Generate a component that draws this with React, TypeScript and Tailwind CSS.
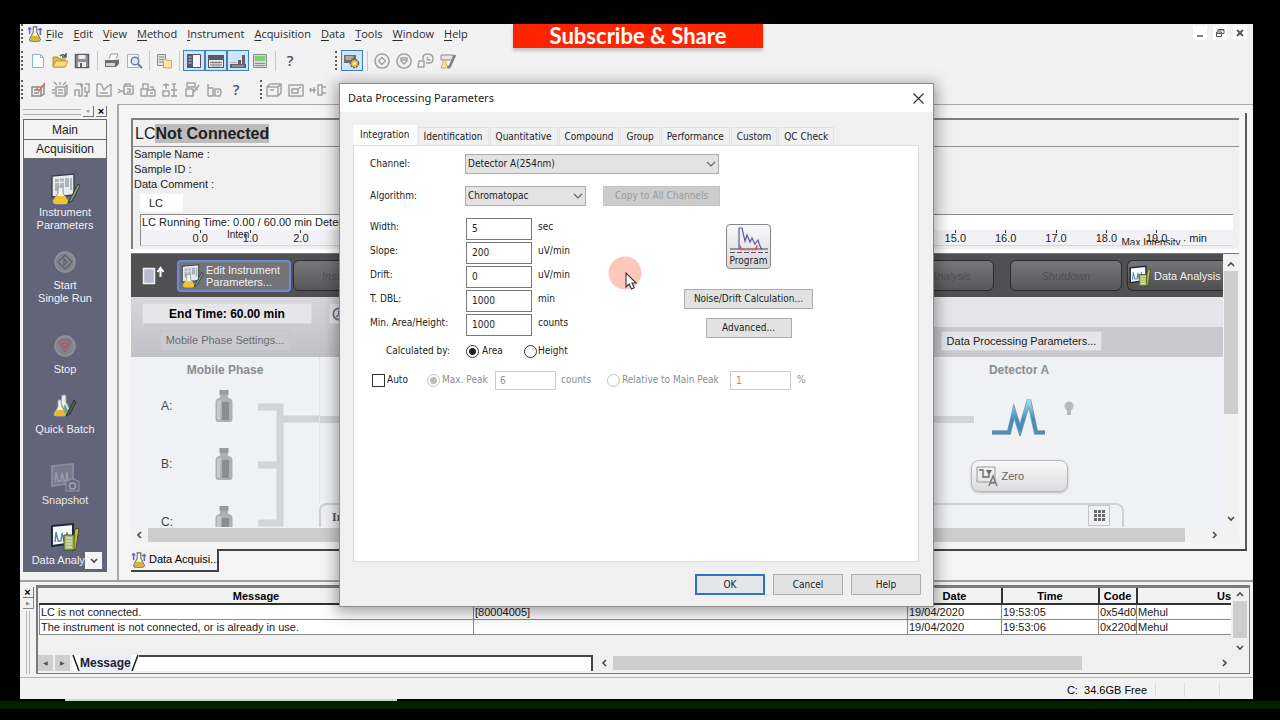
import type { ReactNode } from "react";

const arial = "font-['Liberation_Sans',sans-serif]";
const ui = "font-['DejaVu_Sans_Condensed','Noto_Sans',sans-serif]";

/* ---------- icons ---------- */

function Ico({ children, size = "h-[18px] w-[18px]" }: { children: ReactNode; size?: string }) {
  return (
    <svg viewBox="0 0 18 18" className={`${size} shrink-0`} fill="none" aria-hidden="true">
      {children}
    </svg>
  );
}

const FlaskLogo = () => (
  <Ico size="h-4 w-4">
    <path d="M3 1v8M1 3h4M15 2v8M12 4h5" stroke="#6a6ab8" strokeWidth="1.8" />
    <path d="M7 1h4v6l4 8q0 2-2 2H5q-2 0-2-2l4-8z" fill="#f7f7e8" stroke="#666" strokeWidth="1.2" />
    <path d="M5.5 11h7l2 4q0 1.5-1.5 1.5H5q-1.5 0-1.5-1.5z" fill="#d8b52a" />
  </Ico>
);

const InstrumentIcon = ({ size = "h-8 w-8" }: { size?: string }) => (
  <svg viewBox="0 0 32 32" className={`${size} shrink-0`} fill="none" aria-hidden="true">
    <path d="M3 3l22-2v21L3 24z" fill="#e6ebee" stroke="#39424c" strokeWidth="1.4" />
    <path d="M6 6h4v3H6zM11 5.500h4v3h-4zM16 5h4v9h-4zM6 10h4v8H6zM11 10h4v4h-4zM21 5h2v12h-2z" fill="#a9b4bd" />
    <path d="M9 14h5v6l5 8q0 3-3 3H7q-3 0-3-3l5-8z" fill="#f3f6ee" stroke="#8a9098" />
    <path d="M7 23h9l3 5q0 3-3 3H7q-3 0-3-3z" fill="#eec52c" />
    <path d="M29 11l-8 15-2 4 4-2 8-15z" fill="#8a9a78" stroke="#2c3638" />
  </svg>
);

const AnalysisIcon = ({ dim = false, size = "h-8 w-8" }: { dim?: boolean; size?: string }) => (
  <svg viewBox="0 0 32 32" className={`${size} shrink-0`} fill="none" opacity={dim ? 0.55 : 1} aria-hidden="true">
    <path d="M3 5l21-2v19L3 25z" fill={dim ? "#8b8e9c" : "#f5fafc"} stroke={dim ? "#a9abb5" : "#1f2b38"} strokeWidth="2" />
    <path d="M6 21l1-10 2 9 3 0 1-8 2 8 2-1 1-8 1 8" stroke={dim ? "#c6c8d0" : "#5f7fa8"} strokeWidth="1.400" />
    {dim ? (
      <>
        <path d="M17 20h3l1-2h5l1 2h3v10H17z" fill="#6c6f7e" stroke="#c6c8d0" />
        <circle cx="23.500" cy="25" r="3" stroke="#d6d8de" strokeWidth="1.500" />
      </>
    ) : (
      <>
        <path d="M26 8l4-1-3 21-4 2z" fill="#c2b54a" stroke="#4c4a22" />
        <path d="M15 14h10v15H15z" fill="#a9bb6c" stroke="#445028" />
        <path d="M17 17h6M17 20h6M17 23h6M17 26h6" stroke="#eef3cf" />
      </>
    )}
  </svg>
);

const RoundIcon = ({ red = false }: { red?: boolean }) => (
  <svg viewBox="0 0 32 32" className="h-8 w-8" fill="none" aria-hidden="true">
    <circle cx="16" cy="16" r="10" fill="#83848d" stroke="#92939c" strokeWidth="1.500" />
    {red ? (
      <path d="M10 12l3-2h6l3 2-6 10zM13 13h6l-3 5z" stroke="#a0606a" strokeWidth="1.400" />
    ) : (
      <path d="M16 9l7 7-7 7-7-7zM15 13v6l3-3z" stroke="#60636e" strokeWidth="1.400" />
    )}
  </svg>
);

const BatchIcon = () => (
  <svg viewBox="0 0 32 32" className="h-8 w-8" fill="none" aria-hidden="true">
    <path d="M9 10h4v7l4 7q0 2-2 2H7q-2 0-2-2l4-7z" fill="#f4f4ea" stroke="#9aa" />
    <path d="M8 20h6l3 4q0 2-2 2H7q-2 0-2-2z" fill="#ecb62f" />
    <path d="M13 5h4v7l4 8h-6l-3-7z" fill="#e9efe9" stroke="#8b9a98" />
    <path d="M16 14l5 10h-5l-2-5z" fill="#7da78d" />
    <path d="M25 10l-6 12-2 4 4-2 6-12z" fill="#566052" stroke="#2c342c" />
  </svg>
);

const G = ({ d }: { d: string }) => (
  <Ico>
    <path d={d} stroke="#a2a2a2" strokeWidth="1.500" strokeLinejoin="round" />
  </Ico>
);

const TestIcon = () => (
  <Ico>
    <path d="M3 6h9v9H3zM12 6l3-2v9l-3 2M5 9h4M5 12h5" stroke="#8c8c8c" strokeWidth="1.500" />
    <path d="M7 6l3 4 6-8" stroke="#e06a6a" strokeWidth="1.500" />
  </Ico>
);

const HelpIcon = () => <span className="font-['Noto_Sans',sans-serif] text-[15px] leading-none font-medium text-[#484858]">?</span>;

const NewIcon = () => (
  <Ico>
    <path d="M3.500 2.500h8l3 3v10h-11z" fill="#fbfdff" stroke="#8fb0dc" />
    <path d="M11.500 2.500v3h3" stroke="#8fb0dc" />
  </Ico>
);
const OpenIcon = () => (
  <Ico>
    <path d="M2 5h5l1 2h6v8H2z" fill="#e7b84a" stroke="#b08a3a" />
    <path d="M5 9h12l-3 6H2z" fill="#fbdc85" stroke="#c79c40" />
    <path d="M9 4q3-3 6 1M15 1v4h-4" stroke="#555" strokeWidth="1.500" />
  </Ico>
);
const SaveIcon = () => (
  <Ico>
    <path d="M2.500 2.500h13v13h-13z" fill="#8e9296" stroke="#5c6066" strokeWidth="1.500" />
    <path d="M5.500 3h7v4h-7zM5 10h8v5H5z" fill="#eceef0" />
    <path d="M7 11h2v4H7z" fill="#5c6066" />
  </Ico>
);
const PrintIcon = () => (
  <Ico>
    <path d="M6 7l2-5h7l-2 5" fill="#fff" stroke="#9a9a9a" />
    <path d="M2 8h12l2-1v5l-3 3H2z" fill="#6e6e6e" />
    <path d="M3 11h9v3H3z" fill="#d4d4d4" />
  </Ico>
);
const PreviewIcon = () => (
  <Ico>
    <path d="M2.500 2.500h11v13h-11z" fill="#f6f8fc" stroke="#a9afc4" />
    <circle cx="10" cy="9" r="3.800" fill="#dfe7f5" stroke="#6f7aa6" strokeWidth="1.400" />
    <path d="M13 12l4 4" stroke="#6f7aa6" strokeWidth="2" />
  </Ico>
);
const ReportIcon = () => (
  <Ico>
    <path d="M2.500 2.500h8v11h-8zM4 5h5M4 7.500h5M4 10h5" fill="#e2e2e2" stroke="#8a8a8a" />
    <path d="M8.500 7h3l1 1.500h4V16h-8z" fill="#fbe3a0" stroke="#c9a962" />
  </Ico>
);
const PaneLeft = () => (
  <Ico>
    <path d="M2.500 2.500h13v13h-13z" fill="#f4f6fa" stroke="#555" />
    <path d="M2 2h6v14H2z" fill="#50586a" />
    <path d="M3.500 5h3M3.500 8h3M3.500 11h3" stroke="#cdd3e0" />
  </Ico>
);
const PaneGrid = () => (
  <Ico>
    <path d="M1.500 3.500h15v12h-15z" fill="#e4e4e4" stroke="#555" />
    <path d="M1 3h16v5H1z" fill="#555b66" />
    <path d="M3 10.500h12M3 13h12M6 9v6M9 9v6M12 9v6" stroke="#8a8a8a" />
  </Ico>
);
const PaneBars = () => (
  <Ico>
    <path d="M1 12h16v4H1zM9 8h3v6H9zM13 3h3v11h-3z" fill="#5f6368" />
    <path d="M1 10.500h7M3 14h12" stroke="#b8b8b8" />
  </Ico>
);
const MonitorIcon = () => (
  <Ico>
    <path d="M2.500 2.500h13v13h-13z" fill="#d8d8d8" stroke="#8a8a8a" />
    <path d="M4 4h10v5H4z" fill="#7ed07e" />
    <path d="M4 11.500h10M4 13.500h10" stroke="#8e8e8e" />
  </Ico>
);
const GearIcon = () => (
  <Ico>
    <path d="M1 3h12v8H1z" fill="#6e6e6e" />
    <path d="M2.500 5h8M2.500 7h6" stroke="#e8e8e8" />
    <circle cx="11.500" cy="11.500" r="4" fill="#e9bf55" stroke="#7a6226" strokeWidth="1.500" strokeDasharray="2 .8" />
    <circle cx="11.500" cy="11.500" r="1.300" fill="#fff" />
  </Ico>
);
const PenFlask = () => (
  <Ico>
    <path d="M2 3h12v5H2z" fill="#e6e6e6" stroke="#8c8c8c" />
    <path d="M4 8h3v3l2 5H2l2-5z" fill="#f3e3a8" stroke="#c9ae60" />
    <path d="M16 3l-5 11-2 2" stroke="#808080" strokeWidth="2.500" />
  </Ico>
);

function Chevron({ dir, className = "" }: { dir: "up" | "down" | "left" | "right"; className?: string }) {
  const d = { up: "M1 6l3-3 3 3", down: "M1 2l3 3 3-3", left: "M5 1L2 4l3 3", right: "M3 1l3 3-3 3" }[dir];
  return (
    <svg viewBox="0 0 8 8" className={`h-2 w-2 shrink-0 ${className}`} fill="none" aria-hidden="true">
      <path d={d} stroke="#4a4a4a" strokeWidth="1.600" />
    </svg>
  );
}

/* ---------- menu and tool bars ---------- */

const Grip = () => <span className="h-[19px] w-[3px] shrink-0 border-l-2 border-dotted border-[#5a5a5a]" />;
const Sep = () => (
  <span className="flex w-2 shrink-0 justify-center">
    <span className="h-5 w-px bg-[#c8c8c8]" />
  </span>
);

function Tool({ label, active = false, children }: { label: string; active?: boolean; children: ReactNode }) {
  return (
    <button
      type="button"
      aria-label={label}
      className={`flex h-[21px] w-[22px] shrink-0 items-center justify-center ${active ? "border border-[#3f7fc0] bg-[#cfe4f7]" : ""}`}
    >
      {children}
    </button>
  );
}

const menus = ["File", "Edit", "View", "Method", "Instrument", "Acquisition", "Data", "Tools", "Window", "Help"];

const grayTools: [string, string][] = [
  ["Batch table", "M5 6h9v9H5zM14 6l2-2v8l-2 3M6 4L3 1M9 4V1M12 4l3-3M1 9h3M1 12h3M7 9h5M7 12h5"],
  ["Sequence", "M2 15V9h4v6h3V3H3M12 3h4v8h-4V6M7 3l2 3M11 15h4M14 11v4"],
  ["Plot", "M2 3v12h14V3M2 3h4l3 6 3-3 4-3M5 12h8"],
  ["Pump", "M7 5h9v8H7zM1 8l3 2-3 2M4 10h3M8 5V3h6M10 8h3v3h-3"],
  ["Oven", "M4 3h5v5H4zM2 8h6v7H2zM9 9h7v6H9M11 12h3M11 6h3v3"],
  ["Valve", "M2 4h6M5 2v6M2 10h6v5H2zM11 3h4M13 3v12M10 9h6M10 15h6"],
  ["Autosampler", "M4 2h8v4H4zM3 8h7v7H3zM10 12l6-8M12 7l3 2"],
  ["Detector", "M3 3v12M3 15h5V7H3M10 8h5q2 3 0 7h-5zM12 11h2"],
];
const boxTools: [string, string][] = [
  ["Module", "M2 6h11v9H2zM2 6l3-3h11l-3 3M16 3v9l-3 3M5 9h4"],
  ["Controller", "M2 4h14v11H2zM5 8h6v4H5zM11 8l3-2"],
  ["Flow", "M1 9h6M5 6v6M9 4h4v10H9zM13 6h4M13 12h4M2 7l-1 2 1 2"],
];

function MenuBar() {
  return (
    <div className="flex h-[22px] items-start pb-[3px] pl-px">
      <nav className="flex flex-1 items-center font-['Open_Sans','Noto_Sans',sans-serif] text-[11px] leading-4 font-medium text-[#2c2c2c]" aria-label="Main menu">
        <Grip />
        <span className="mr-[3px] ml-[3px]">
          <FlaskLogo />
        </span>
        <span className="flex gap-2.5">
          {menus.map((m) => (
            <a key={m} href={`#${m.toLowerCase()}`}>
              <span className="underline underline-offset-2">{m[0]}</span>
              {m.slice(1)}
            </a>
          ))}
        </span>
      </nav>
      <div className="flex gap-[6px] pt-[2px] pr-[6px] text-[#555]">
        <button type="button" aria-label="Minimise" className="flex h-3.5 w-3.5 items-center justify-center bg-white">
          <svg viewBox="0 0 10 10" className="h-2.5 w-2.5" stroke="currentColor" strokeWidth="1.500"><path d="M2 8h6" /></svg>
        </button>
        <button type="button" aria-label="Restore" className="flex h-3.5 w-3.5 items-center justify-center bg-white">
          <svg viewBox="0 0 10 10" className="h-2.5 w-2.5" fill="none" stroke="currentColor"><path d="M3 3.500V1.500h6v4H7M1.500 4h5v4.500h-5zM1.500 5.500h5M3 2h6" /></svg>
        </button>
        <button type="button" aria-label="Close window" className="flex h-3.5 w-3.5 items-center justify-center bg-white">
          <svg viewBox="0 0 10 10" className="h-2.5 w-2.5" stroke="currentColor" strokeWidth="1.800"><path d="M2 2l6 6M8 2L2 8" /></svg>
        </button>
      </div>
    </div>
  );
}

function ToolBars() {
  return (
    <>
      <div className="flex h-[29px] items-center pl-px">
        <Grip />
        <span className="w-[3px] shrink-0" />
        <Tool label="New"><NewIcon /></Tool>
        <Tool label="Open"><OpenIcon /></Tool>
        <Tool label="Save"><SaveIcon /></Tool>
        <Sep />
        <Tool label="Print"><PrintIcon /></Tool>
        <Tool label="Preview"><PreviewIcon /></Tool>
        <Sep />
        <Tool label="Report"><ReportIcon /></Tool>
        <Sep />
        <Tool label="Assistant bar" active><PaneLeft /></Tool>
        <Tool label="Chromatogram view" active><PaneGrid /></Tool>
        <Tool label="Instrument view" active><PaneBars /></Tool>
        <Tool label="Monitor"><MonitorIcon /></Tool>
        <Sep />
        <Tool label="Help"><HelpIcon /></Tool>
        <span className="w-[34px] shrink-0" />
        <Grip />
        <span className="w-[3px] shrink-0" />
        <Tool label="Settings" active><GearIcon /></Tool>
        <Sep />
        <Tool label="Start"><G d="M9 2a7 7 0 1 0 .1 0M9 5.500l3.500 3.500L9 12.500 5.500 9z" /></Tool>
        <Tool label="Stop"><G d="M9 2a7 7 0 1 0 .1 0M6 6h6v3l-3 3-3-3zM6 8h6" /></Tool>
        <Tool label="Snapshot"><G d="M6 8q-1-6 4.500-6t5.500 5q0 4-4 4H9M2 9h5v6H1zM10.500 5v3h3" /></Tool>
        <Tool label="Edit method"><PenFlask /></Tool>
      </div>
      <div className="flex h-[29px] items-center pl-px">
        <Grip />
        <span className="w-[3px] shrink-0" />
        <Tool label="System check"><TestIcon /></Tool>
        {grayTools.map(([n, d]) => (
          <Tool key={n} label={n}><G d={d} /></Tool>
        ))}
        <Tool label="Toolbar help"><HelpIcon /></Tool>
        <span className="w-[13px] shrink-0" />
        <Grip />
        {boxTools.map(([n, d]) => (
          <Tool key={n} label={n}><G d={d} /></Tool>
        ))}
      </div>
    </>
  );
}

/* ---------- assistant bar ---------- */

function SideItem({ icon, label, dim = false }: { icon: ReactNode; label: string[]; dim?: boolean }) {
  return (
    <button type="button" className={`flex w-full flex-col items-center gap-px ${dim ? "text-[#e6e6ea]" : "text-[#f0f0f4]"}`}>
      {icon}
      <span className="block">
        {label.map((l) => (
          <span key={l} className="block">{l}</span>
        ))}
      </span>
    </button>
  );
}

function Sidebar() {
  return (
    <aside className={`flex w-[97px] shrink-0 flex-col pr-[10px] pb-2 pl-[3px] ${arial}`}>
      <div className="flex h-[15px] items-center gap-0.5">
        <span className="h-1.5 flex-1 border-y border-[#b0b0b0]" />
        <button type="button" aria-label="Bar options" className="flex h-[11px] w-[11px] items-center justify-center border-r border-b border-[#777] text-[5px] leading-none text-[#888]">▼</button>
        <button type="button" aria-label="Close bar" className="flex h-[11px] w-[11px] items-center justify-center border-r border-b border-[#777] text-[11px] leading-none font-bold">×</button>
      </div>
      <button type="button" className="h-[21px] shrink-0 border border-[#6a6a6a] bg-[#f3f3f3] text-[12px] leading-4 text-[#222]">Main</button>
      <button type="button" className="h-[19px] shrink-0 border border-t-0 border-[#6a6a6a] bg-[#f3f3f3] text-[12px] leading-4 text-[#222]">Acquisition</button>
      <div className="relative flex flex-1 flex-col gap-[25px] bg-[#62647a] pt-[14px] pb-[3px] text-[11px] leading-[13px]">
        <div className="flex flex-col gap-[14px]">
          <SideItem icon={<InstrumentIcon />} label={["Instrument", "Parameters"]} />
          <SideItem icon={<RoundIcon />} label={["Start", "Single Run"]} />
        </div>
        <div className="flex flex-col gap-[14px]">
          <SideItem icon={<RoundIcon red />} label={["Stop"]} />
          <SideItem icon={<BatchIcon />} label={["Quick Batch"]} />
        </div>
        <div className="flex flex-col gap-[14px]">
          <SideItem icon={<AnalysisIcon dim />} label={["Snapshot"]} dim />
          <SideItem icon={<AnalysisIcon />} label={["Data Analysis"]} />
        </div>
        <button type="button" aria-label="Scroll bar down" className="absolute right-[5px] bottom-[3px] flex h-[17px] w-[17px] items-center justify-center bg-[#f4f4f6]">
          <Chevron dir="down" />
        </button>
      </div>
    </aside>
  );
}

/* ---------- document ---------- */

const ticks = Array.from({ length: 20 }, (_, i) => `${i}.0`);

function ChartStrip() {
  return (
    <div className="mr-[6px] ml-[7px] text-[11px]">
      <button type="button" className="block h-[18px] w-[43px] bg-white pr-5 text-right leading-[18px]">LC</button>
      <div className="relative mt-0.5 h-8 overflow-hidden border-t border-b border-l border-[#8a8a8a] border-b-[#d6d6d6] bg-[#f2f2f6]">
        <p className="h-[15px] bg-white pl-px leading-[15px]">LC Running Time: 0.00 / 60.00 min Detector</p>
        <div className="flex pr-[51px] pl-[34px]">
          {ticks.map((t) => (
            <span key={t} className="flex flex-1 flex-col items-center leading-[10px]">
              <span className="h-[3px] w-px bg-[#333]" />
              {t}
            </span>
          ))}
        </div>
        <span className="absolute top-[13px] left-[86px] text-[10px] leading-[14px]">Inten</span>
        <span className="absolute top-[21px] right-[47px] text-[10px] leading-[14px]">Max Intensity :</span>
        <span className="absolute top-[16px] right-[26px] leading-[14px]">min</span>
      </div>
    </div>
  );
}

function DarkBar() {
  const off = "h-[31px] w-28 rounded-md border border-[#2c2c2e] bg-linear-to-b from-[#77777a] to-[#58585a] text-[#4f4f51] italic";
  return (
    <div className="flex h-[43px] shrink-0 items-center overflow-hidden bg-[#505052] pl-[11px] text-[11px] leading-3">
      <svg viewBox="0 0 24 20" className="mr-[11px] h-5 w-6" fill="none" aria-hidden="true">
        <path d="M1.500 2.500h11v15h-11z" fill="#b9bbd0" stroke="#f0f0f8" strokeWidth="1.500" />
        <path d="M18.500 11V3M15.500 6l3-4 3 4" stroke="#fff" strokeWidth="2" />
      </svg>
      <button type="button" className="flex h-8 w-[114px] shrink-0 items-center gap-0.5 rounded-sm border-2 border-[#6c8ad8] bg-[#747478] pl-px text-left text-[#f2f2f2]">
        <InstrumentIcon size="h-6 w-6" />
        <span>Edit Instrument<br />Parameters...</span>
      </button>
      <button type="button" disabled className={`${off} ml-0.5 pl-7 text-left`}>Instrument</button>
      <span className="flex-1" />
      <button type="button" disabled className={`${off} mr-4 pr-[22px] text-right`}>Analysis</button>
      <button type="button" disabled className={`${off} mr-[5px]`}>Shutdown</button>
      <button type="button" className="flex h-[31px] w-24 shrink-0 items-center gap-0.5 rounded-l-md border border-r-0 border-[#2c2c2e] bg-linear-to-b from-[#77777a] to-[#4e4e50] whitespace-nowrap text-[#f0f0f0]">
        <AnalysisIcon size="h-6 w-6" />
        Data Analysis
      </button>
    </div>
  );
}

const Bottle = () => (
  <svg viewBox="0 0 18 34" className="h-[34px] w-[18px]" aria-hidden="true">
    <path d="M4.500 1h9v5h-9z" fill="#999b9e" />
    <path d="M5 6h8v2.500l3 1.500q1.500 1 1.500 3v17q0 3-3 3h-11q-3 0-3-3V13q0-2 1.500-3l3-1.500z" fill="#aeb0b3" />
    <path d="M2 14q0-3 4-3l-1 20q-3 0-3-2z" fill="#c9cacd" />
    <path d="M7 13h7v18H7z" fill="#8b8d90" />
  </svg>
);

function Schematic() {
  const heading = "text-[12px] leading-4 font-bold whitespace-nowrap text-[#8a8c8f]";
  return (
    <div className="flex shrink grow basis-0 items-start justify-between overflow-hidden bg-[#eff1f4]">
      <div className="w-[188px] shrink-0 pt-[5px]">
        <h2 className={`text-center ${heading}`}>Mobile Phase</h2>
        <div className="flex pt-[11px] pl-[30px]">
          <div className="flex flex-col gap-6 text-[12px] text-[#444]">
            {["A:", "B:", "C:"].map((l) => (
              <div key={l} className="flex items-center gap-[42px]">
                <span className="w-3">{l}</span>
                <Bottle />
              </div>
            ))}
          </div>
          <svg viewBox="0 0 61 150" className="ml-[25px] h-[150px] w-[61px] shrink-0" fill="none" aria-hidden="true">
            <path d="M0 18h22v116H0M0 76h22M22 30h39" stroke="#d2d4d8" strokeWidth="7" />
          </svg>
        </div>
      </div>
      <div className="flex min-w-0 flex-1 flex-col">
        <div className="flex">
          <div className="h-[146px] flex-1 border-l border-[#e4e5e8] pt-[59px]">
            <div className="h-[7px] bg-[#d2d4d8]" />
          </div>
          <div className="flex w-[90px] flex-col items-center pt-[5px]">
            <h2 className={heading}>Detector A</h2>
            <svg viewBox="0 0 54 42" className="mt-4 h-[42px] w-[54px]" fill="none" aria-hidden="true">
              <defs>
                <linearGradient id="pk" x1="0" y1="0" x2="0" y2="1">
                  <stop offset="0" stopColor="#a8dcee" />
                  <stop offset=".6" stopColor="#3d8fc0" />
                  <stop offset="1" stopColor="#4a90b8" />
                </linearGradient>
              </defs>
              <path d="M0 38.500h17l5-21 6 19L37 6l7 32.500h9" stroke="#7b99ab" strokeWidth="4.500" />
              <path d="M0 38.500h17l5-21 6 19L37 6l7 32.500h9" stroke="url(#pk)" strokeWidth="3" />
            </svg>
            <button type="button" className="mt-6 flex h-8 w-[97px] shrink-0 items-center gap-1 rounded-lg border border-[#b8b8ba] bg-linear-to-b from-[#f8f8f8] to-[#dcdcde] pl-1 text-[11px] text-[#666] shadow-[0_1px_2px_#8888]">
              <svg viewBox="0 0 22 22" className="h-[22px] w-[22px]" fill="none" aria-hidden="true">
                <path d="M1 2h18v15H1z" stroke="#999" />
                <path d="M3 5h4v7h6V9" stroke="#666" strokeWidth="1.300" />
                <path d="M10 5h6l-3 5z" fill="#666" />
                <path d="M13 21l4-10 4 10M14.500 18h5" stroke="#777" strokeWidth="1.500" />
              </svg>
              Zero
            </button>
          </div>
          <div className="w-[159px] pt-[44px]">
            <svg viewBox="0 0 10 16" className="h-4 w-2.5" aria-hidden="true">
              <circle cx="5" cy="5" r="4.500" fill="#b6b8bb" />
              <path d="M3 9h4v5H3z" fill="#b6b8bb" />
            </svg>
          </div>
        </div>
        <div className="mr-[99px] flex h-10 items-start justify-between rounded-t-lg border-2 border-b-0 border-[#cfd0d3] pr-3 pl-[11px]">
          <span className="font-['Liberation_Serif',serif] text-[12px] leading-6 font-bold text-[#555]">In</span>
          <button type="button" aria-label="Show grid" className="flex h-[21px] w-[22px] items-center justify-center border border-[#c4c4c8]">
            <svg viewBox="0 0 11 11" className="h-[11px] w-[11px]" fill="#6a6a6e" aria-hidden="true">
              <path d="M0 0h3v3H0zM4 0h3v3H4zM8 0h3v3H8zM0 4h3v3H0zM4 4h3v3H4zM8 4h3v3H8zM0 8h3v3H0zM4 8h3v3H4zM8 8h3v3H8z" />
            </svg>
          </button>
        </div>
      </div>
    </div>
  );
}

function DocumentView() {
  return (
    <main className={`flex min-w-0 flex-1 flex-col border-t border-l-2 border-[#a8a8a8] bg-[#f5f5f5] pt-2 pr-[6px] pb-2 pl-[12px] ${arial}`}>
      <div className="flex flex-1 flex-col border-r-2 border-[#5a5a5a] pt-[5px] pr-[6px]">
        <section className="flex flex-1 flex-col pb-[6px]">
          <div className="border-t-2 border-l-2 border-[#808080] bg-[#f0f0f0] pb-[3px] text-[#222]">
            <h1 className="flex h-[27px] items-center border-b border-[#909090] pl-0.5 text-[16px] leading-[19px]">
              LC<span className="bg-[#bcbcbc] font-bold">Not Connected</span>
            </h1>
            <div className="pb-0.5 pl-px text-[11px] leading-[15px]">
              <p>Sample Name :</p>
              <p>Sample ID :</p>
              <p>Data Comment :</p>
            </div>
            <ChartStrip />
          </div>
          <div className="h-[5px] shrink-0 border-b border-[#777] bg-white" />
          <div className="flex flex-1">
            <div className="flex min-w-0 flex-1 flex-col">
              <DarkBar />
              <div className="flex h-[60px] shrink-0 justify-between bg-linear-to-b from-[#e6e6ea] from-50% to-[#c8c8ce] to-50% text-[11px] whitespace-nowrap">
                <div className="flex w-[242px] flex-col bg-linear-to-b from-[#d6d6da] to-[#c0c0c7] pt-[6px] pl-[11px]">
                  <div className="flex gap-[17px]">
                    <button type="button" className="h-[21px] w-[170px] border border-[#d8d8dc] bg-[#e6e6e9] text-[12px] font-bold text-black">End Time: 60.00 min</button>
                    <button type="button" aria-label="Time settings" className="flex h-[21px] w-6 items-center border border-[#d8d8dc] bg-[#e6e6e9] pl-0.5">
                      <svg viewBox="0 0 16 16" className="h-3.5 w-3.5" fill="none" stroke="#6e7388" strokeWidth="2"><circle cx="8" cy="8" r="6.500" /><path d="M8 4v5l-3 2" /></svg>
                    </button>
                  </div>
                  <button type="button" className="mt-[6px] ml-[18px] h-[21px] w-[130px] border border-[#c4c4ca] bg-[#cacace] text-[#6a6a6e]">Mobile Phase Settings...</button>
                </div>
                <div className="flex items-end pr-[121px] pb-[6px]">
                  <button type="button" className="h-5 w-[161px] border border-[#d4d4d8] bg-[#e6e6ea] text-[#222]">Data Processing Parameters...</button>
                </div>
              </div>
              <Schematic />
              <div className="flex h-4 shrink-0 items-center bg-[#f2f2f2] pr-[5px] pl-[5px]">
                <Chevron dir="left" />
                <span className="mr-[25px] ml-1 h-3.5 flex-1 bg-[#cdcdcd]" />
                <Chevron dir="right" />
              </div>
            </div>
            <div className="flex w-4 shrink-0 flex-col items-center bg-[#f2f2f2] pt-[6px] pb-5">
              <Chevron dir="up" />
              <span className="mt-[3px] h-[143px] w-3.5 bg-[#cdcdcd]" />
              <span className="flex-1" />
              <Chevron dir="down" />
            </div>
          </div>
        </section>
      </div>
      <div className="flex">
        <button type="button" className="flex h-[23px] w-[88px] items-center gap-0.5 border-r-2 border-b-2 border-[#444] bg-[#f3f3f3] text-[11px] whitespace-nowrap">
          <FlaskLogo />
          Data Acquisi...
        </button>
        <span className="flex-1 border-t-2 border-[#444]" />
      </div>
    </main>
  );
}

/* ---------- message pane ---------- */

const rows = [
  ["LC is not connected.", "[80004005]", "19/04/2020", "19:53:05", "0x54d0", "Mehul"],
  ["The instrument is not connected, or is already in use.", "", "19/04/2020", "19:53:06", "0x220d", "Mehul"],
];

function MessagePane() {
  return (
    <section className={`flex h-[97px] shrink-0 gap-0.5 border-t-2 border-[#a0a0a0] pt-[3px] pr-[3px] pb-[3px] pl-0.5 ${arial}`} aria-label="Messages">
      <div className="flex w-3 shrink-0 flex-col items-center">
        <button type="button" aria-label="Close messages" className="mt-0.5 h-[11px] w-[11px] border-r border-b border-[#777] text-[11px] leading-[9px] font-bold">×</button>
        <button type="button" aria-label="Expand messages" className="h-[11px] w-[11px] border-r border-b border-[#888] text-[5px] leading-[9px] text-[#888]">▶</button>
        <span className="mt-0.5 w-1 flex-1 border-x border-[#b4b4b4]" />
      </div>
      <div className="flex min-w-0 flex-1 flex-col border-t-3 border-r border-b border-l-2 border-[#7a7a7a] bg-[#f0f0f0]">
        <div className="flex min-h-0 flex-1">
          <div className="min-w-0 flex-1 overflow-hidden pl-px">
            <table className="w-[1284px] table-fixed border-collapse text-left text-[11px] text-[#222]">
              <colgroup>
                <col className="w-[434px]" />
                <col className="w-[434px]" />
                <col className="w-[94px]" />
                <col className="w-[97px]" />
                <col className="w-[38px]" />
                <col />
              </colgroup>
              <thead>
                <tr className="h-4 border-b-2 border-[#333] bg-[#f2f2f2] text-center leading-[14px] text-black">
                  {["Message", "", "Date", "Time", "Code", "User"].map((h, i) => (
                    <th key={i} scope="col" className="border-r-2 border-[#333] p-0 font-bold">{h}</th>
                  ))}
                </tr>
              </thead>
              <tbody>
                {rows.map((r) => (
                  <tr key={r[0]} className="bg-white">
                    {r.map((c, i) => (
                      <td key={i} className="h-[15px] border border-[#8a8a8a] py-0 pr-0 pl-px leading-[14px] whitespace-nowrap">{c}</td>
                    ))}
                  </tr>
                ))}
              </tbody>
            </table>
          </div>
          <div className="flex w-[18px] shrink-0 flex-col items-center pt-0.5 pb-[3px]">
            <Chevron dir="up" />
            <span className="mt-[3px] h-[37px] w-3.5 bg-[#cdcdcd]" />
            <span className="flex-1" />
            <Chevron dir="down" />
          </div>
        </div>
        <div className="mb-0.5 flex h-4 shrink-0 items-stretch">
          <button type="button" aria-label="Previous sheet" className="w-[15px] bg-[#cfcfcf] text-[6px] leading-none text-[#555]">◀</button>
          <button type="button" aria-label="Next sheet" className="ml-0.5 w-[15px] bg-[#cfcfcf] text-[6px] leading-none text-[#555]">▶</button>
          <div className="ml-0.5 flex flex-[545] border-r-2 border-[#444] bg-white">
            <svg viewBox="0 0 8 16" className="h-4 w-2" aria-hidden="true"><path d="M1 0l6 16" stroke="#222" strokeWidth="1.500" /></svg>
            <button type="button" className="bg-[#e8edf8] text-[12px] leading-4 font-bold text-[#223]">Message</button>
            <svg viewBox="0 0 8 16" className="h-4 w-2" aria-hidden="true"><path d="M1 16L7 0" stroke="#222" strokeWidth="1.500" /></svg>
            <span className="flex-1 border-t-2 border-[#444]" />
          </div>
          <div className="flex flex-[658] items-center pr-[21px] pl-2">
            <Chevron dir="left" />
            <span className="mr-[138px] ml-1 h-3.5 flex-1 bg-[#cdcdcd]" />
            <Chevron dir="right" />
          </div>
        </div>
      </div>
    </section>
  );
}

/* ---------- dialog ---------- */

const tabs = ["Integration", "Identification", "Quantitative", "Compound", "Group", "Performance", "Custom", "QC Check"];
const fields = [
  ["width", "Width:", "5", "sec"],
  ["slope", "Slope:", "200", "uV/min"],
  ["drift", "Drift:", "0", "uV/min"],
  ["tdbl", "T. DBL:", "1000", "min"],
  ["minarea", "Min. Area/Height:", "1000", "counts"],
];

function Select({ id, value, width }: { id: string; value: string; width: string }) {
  return (
    <span className={`relative flex ${width}`}>
      <select id={id} defaultValue={value} className="h-5 w-full appearance-none border border-[#acacac] bg-[#e3e3e3] pl-0.5 outline-none">
        <option>{value}</option>
      </select>
      <svg viewBox="0 0 10 6" className="pointer-events-none absolute top-[7px] right-[3px] h-1.5 w-2.5" fill="none" aria-hidden="true">
        <path d="M1 1l4 4 4-4" stroke="#666" strokeWidth="1.200" />
      </svg>
    </span>
  );
}

const radio =
  "h-[13px] w-[13px] shrink-0 appearance-none rounded-full border border-[#333] bg-white checked:bg-[radial-gradient(#222_0_3px,#fff_4px)] disabled:border-[#c4c4c4] disabled:checked:bg-[radial-gradient(#bbb_0_3px,#fff_4px)]";
const btn = "border border-[#adadad] bg-[#e2e2e2]";

function Dialog() {
  return (
    <div
      role="dialog"
      aria-label="Data Processing Parameters"
      className={`absolute top-[59px] left-[319px] w-[595px] border border-[#8c8c8c] bg-[#f0f0f0] text-[10px] leading-[14px] text-[#222] shadow-[0_3px_14px_3px_rgba(0,0,0,0.35)] ${ui}`}
    >
      <header className="flex h-7 items-center justify-between bg-white pr-[9px] pl-2">
        <span className="font-['Noto_Sans',sans-serif] text-[11px]">Data Processing Parameters</span>
        <button type="button" aria-label="Close">
          <svg viewBox="0 0 11 11" className="h-[11px] w-[11px]" stroke="#333" strokeWidth="1.200" aria-hidden="true">
            <path d="M.5 .5l10 10M10.500 .5l-10 10" />
          </svg>
        </button>
      </header>

      <div className="pt-[13px] pr-3.5 pb-[11px] pl-[13px]">
        <div role="tablist" className="flex items-end gap-px">
          {tabs.map((t, i) => (
            <button
              key={t}
              type="button"
              role="tab"
              aria-selected={i === 0}
              className={i === 0 ? "h-5 bg-white px-[7px]" : "h-[18px] border border-b-0 border-[#e2e2e2] px-[5px]"}
            >
              {t}
            </button>
          ))}
        </div>

        <div className="h-[417px] border border-[#dcdcdc] bg-white pt-2 pl-4">
          <div className="flex items-center">
            <label htmlFor="channel" className="w-[95px]">Channel:</label>
            <Select id="channel" value="Detector A(254nm)" width="w-[254px]" />
          </div>
          <div className="mt-3 flex items-center">
            <label htmlFor="algorithm" className="w-[95px]">Algorithm:</label>
            <Select id="algorithm" value="Chromatopac" width="w-[121px]" />
            <button type="button" disabled className="ml-[17px] h-5 w-[117px] border border-[#c4c4c4] bg-[#cccccc] text-[#9a9a9a]">Copy to All Channels</button>
          </div>

          <div className="mt-3 flex">
            <div className="flex flex-col gap-0.5">
              {fields.map(([id, label, value, unit]) => (
                <div key={id} className="flex items-center">
                  <label htmlFor={id} className="w-24 pb-1">{label}</label>
                  <input id={id} defaultValue={value} className="h-[22px] w-[66px] border border-[#7a7a7a] bg-white pb-0.5 pl-[5px] outline-none" />
                  <span className="w-10 pb-1 pl-[6px]">{unit}</span>
                </div>
              ))}
            </div>
            <div className="ml-28 flex flex-col items-center pt-[6px]">
              <button type="button" className="flex h-[45px] w-[45px] flex-col items-center justify-between rounded-sm border border-[#888] bg-linear-to-b from-[#f8f8fb] to-[#d8d8dc] pt-0.5 pb-px leading-3">
                <svg viewBox="0 0 40 28" className="h-7 w-10" fill="none" aria-hidden="true">
                  <path d="M1 22h38" stroke="#444" strokeWidth="1.200" />
                  <path d="M1 25.500h38" stroke="#555" strokeWidth="1.200" strokeDasharray="5 2" />
                  <path d="M10 22V1h3l2 9 1 4 2-6 3 7 2-4 3 6 3-4 2 6 2 4" stroke="#5c5c96" strokeWidth="1.200" />
                  <path d="M11 22.500h17" stroke="#e06070" strokeWidth="1.500" />
                  <path d="M11 18.500l2 4h-2zM28 18.500l-2 4h2z" fill="#e05060" stroke="#e05060" />
                </svg>
                Program
              </button>
              <button type="button" className={`${btn} mt-5 h-5 w-[129px]`}>Noise/Drift Calculation...</button>
              <button type="button" className={`${btn} mt-[9px] h-5 w-[86px]`}>Advanced...</button>
            </div>
          </div>

          <fieldset className="mt-1.5 flex items-center pl-4">
            <span className="w-20">Calculated by:</span>
            <label className="flex w-[58px] items-center gap-[3px]">
              <input type="radio" name="calc" defaultChecked className={radio} />
              Area
            </label>
            <label className="flex items-center gap-px">
              <input type="radio" name="calc" className={radio} />
              Height
            </label>
          </fieldset>

          <div className="mt-[11px] flex h-[22px] items-center text-[#8e8e8e]">
            <label className="flex w-[57px] items-center gap-0.5 pl-0.5 text-[#222]">
              <input type="checkbox" className="h-[13px] w-[13px] appearance-none border border-[#333] bg-white" />
              Auto
            </label>
            <label className="flex w-[68px] items-center gap-0.5">
              <input type="radio" name="peak" defaultChecked disabled className={radio} />
              Max. Peak
            </label>
            <input aria-label="Maximum peak count" defaultValue="6" disabled className="h-[19px] w-[61px] border border-[#cccccc] bg-white pl-1" />
            <span className="w-[51px] pl-[5px]">counts</span>
            <label className="flex w-[123px] items-center gap-0.5">
              <input type="radio" name="peak" disabled className={radio} />
              Relative to Main Peak
            </label>
            <input aria-label="Relative to main peak" defaultValue="1" disabled className="h-[19px] w-[61px] border border-[#cccccc] bg-white pl-[5px]" />
            <span className="pl-[6px]">%</span>
          </div>
        </div>

        <footer className="-mr-0.5 flex justify-end gap-2 pt-3">
          <button type="button" className="h-[21px] w-[70px] border-2 border-[#2f74c4] bg-[#e4e6e9]">OK</button>
          <button type="button" className={`${btn} h-[21px] w-[70px]`}>Cancel</button>
          <button type="button" className={`${btn} h-[21px] w-[70px]`}>Help</button>
        </footer>
      </div>
    </div>
  );
}

export default function App() {
  return (
    <div className="flex min-h-screen flex-col bg-black pt-6">
      <div className="relative mr-[27px] ml-5 flex flex-1 flex-col bg-[#f2f2f2]">
        <MenuBar />
        <ToolBars />
        <div className="flex flex-1">
          <Sidebar />
          <DocumentView />
        </div>
        <MessagePane />
        <footer className={`flex h-[22px] shrink-0 items-center justify-end border-t border-[#b4b4b4] pt-[3px] pr-[33px] text-[11px] ${arial}`}>
          <span className="pr-2 whitespace-pre">C:  34.6GB Free</span>
          <span className="h-3.5 w-[29px] border-l border-[#dcdcdc]" />
          <span className="h-3.5 w-[35px] border-l border-[#dcdcdc]" />
          <span className="h-3.5 w-px bg-[#dcdcdc]" />
        </footer>
        <div className="absolute top-0 left-[493px] flex h-6 w-[250px] items-center justify-center bg-[#fe2400] font-['Lato','Open_Sans',sans-serif] text-[22px] leading-none font-bold text-white shadow-[0_3px_3px_rgba(0,0,0,0.2)]">
          Subscribe &amp; Share
        </div>
        <Dialog />
        <div className="pointer-events-none absolute top-[232px] left-[588px]">
          <svg viewBox="0 0 34 34" className="h-[34px] w-[34px]" aria-hidden="true">
            <circle cx="17" cy="17" r="16.500" fill="#fbc8bd" />
            <path d="M18 17v14l3.200-3 2.300 5 2.700-1.200-2.300-4.800h4.300z" fill="#fff" stroke="#333" strokeWidth="1.100" />
          </svg>
        </div>
      </div>
      <div className="ml-[65px] h-0.5 w-[332px] bg-[#c8dcc8]" />
      <div className="h-2 bg-[#002000]" />
      <div className="h-[11px]" />
    </div>
  );
}
